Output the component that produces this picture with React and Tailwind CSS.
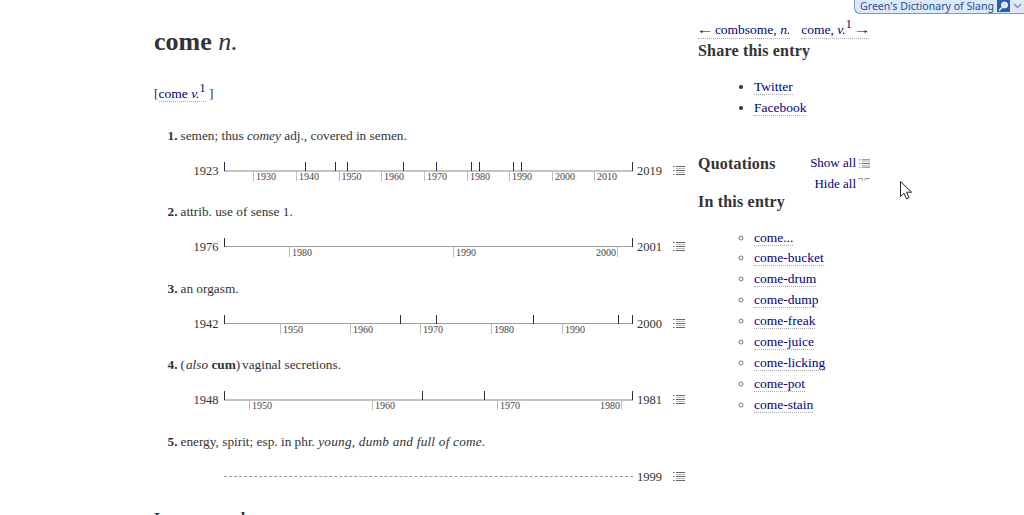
import React from "react";

const ListIcon = ({ className = "" }) => (
  <svg width="12" height="11" viewBox="0 0 12 11" className={className} fill="none" stroke="#666" strokeWidth="1">
    <path d="M0 1.5h1.5M3 1.5h9M0 5.5h1.5M3 5.5h9M0 9.5h1.5M3 9.5h9" />
    <path d="M3 3.5h9M3 7.5h9" stroke="#bbb" />
  </svg>
);

const HideIcon = () => (
  <svg width="12" height="6" viewBox="0 0 12 6" fill="none" stroke="#999" strokeWidth="1">
    <path d="M0 1.5h4.5v2M7 3.5v-2h5" />
  </svg>
);

const Timeline = ({ start, end, major = [], minor = [], thick = false, dashed = false }) => (
  <div className="flex items-start h-[20px] mt-[19px]">
    <div className="w-[64.5px] text-right text-[12.5px] leading-[16px] text-[#333]">{start}</div>
    <div className="relative w-[409px] ml-[5.5px] h-[20px] shrink-0">
      {dashed ? (
        <div className="mt-[7px] border-t border-dashed border-[#999]" />
      ) : (
        <div className={thick ? "mt-[7px] h-[2px] bg-[#c4c4c4]" : "mt-[7px] h-[1px] bg-[#9e9e9e]"} />
      )}
      {major.map((x) => (
        <span key={x} className="absolute top-[-1px] w-[1px] h-[9px] bg-[#2a2a44]" style={{ left: x - 224 }} />
      ))}
      {minor.map(([x, label, right]) => (
        <span
          key={label}
          className="absolute top-[8px] h-[10px] w-[1px] bg-[#bdbdbd]"
          style={{ left: x - 224 }}
        >
          <span
            className={
              right
                ? "absolute right-[2px] top-[-1px] text-[10px] leading-[14px] text-[#444]"
                : "absolute left-[3px] top-[-1px] text-[10px] leading-[14px] text-[#444]"
            }
          >
            {label}
          </span>
        </span>
      ))}
    </div>
    <div className="ml-[4px] w-[25px] text-[12.5px] leading-[16px] text-[#333]">{end}</div>
    <ListIcon className="ml-[11px] mt-[2px]" />
  </div>
);

const Sense = ({ n, children, ...t }) => (
  <div className="h-[76.4px]">
    <p className="pl-[13.5px] text-[13.3px] leading-[16px] h-[16px] text-[#333] whitespace-nowrap">
      <b className="mr-[3px]">{n}.</b>
      {children}
    </p>
    <Timeline {...t} />
  </div>
);

const A = ({ children, className = "" }) => (
  <a className={`text-[#000080] border-b border-dotted border-[#aaa] ${className}`}>{children}</a>
);

const H3 = ({ children, className = "" }) => (
  <h3 className={`font-bold text-[16px] tracking-[0.2px] leading-[20px] text-[#333] ${className}`}>{children}</h3>
);

const entries = ["come...", "come-bucket", "come-drum", "come-dump", "come-freak", "come-juice", "come-licking", "come-pot", "come-stain"];

export default function App() {
  return (
    <div className="relative h-[515px] w-[1024px] overflow-hidden bg-white [font-family:'Liberation_Serif',serif] flex">
      <main className="w-[544px] ml-[154px] shrink-0">
        <h1 className="mt-[27px] text-[26px] leading-[30px] font-bold text-[#333] whitespace-nowrap">
          come <i className="font-normal">n.</i>
        </h1>
        <p className="mt-[28px] h-[18px] text-[13.5px] leading-[18px] text-[#333]">
          [<A>come <i>v.</i><sup className="text-[12px]">1</sup></A> ]
        </p>
        <div className="mt-[25px]">
          <Sense
            n={1}
            start="1923"
            end="2019"
            thick
            major={[224, 304.5, 335, 347, 403, 436, 471, 479, 513, 521, 632]}
            minor={[[253, "1930"], [296, "1940"], [338.5, "1950"], [381, "1960"], [424, "1970"], [467, "1980"], [509, "1990"], [552, "2000"], [594, "2010"]]}
          >
            semen; thus <i>comey</i> adj., covered in semen.
          </Sense>
          <Sense n={2} start="1976" end="2001" major={[224, 632]} minor={[[289, "1980"], [453, "1990"], [617, "2000", true]]}>
            attrib. use of sense 1.
          </Sense>
          <Sense
            n={3}
            start="1942"
            end="2000"
            major={[224, 400, 435.5, 533, 618, 632]}
            minor={[[280, "1950"], [350, "1960"], [420, "1970"], [491, "1980"], [562, "1990"]]}
          >
            an orgasm.
          </Sense>
          <Sense
            n={4}
            start="1948"
            end="1981"
            thick
            major={[224, 422, 484, 632]}
            minor={[[249, "1950"], [372, "1960"], [497, "1970"], [621, "1980", true]]}
          >
            (<i className="ml-[1px]">also</i> <b>cum</b><span className="mr-[-1.5px]">)</span> vaginal secretions.
          </Sense>
          <Sense n={5} start="" end="1999" dashed>
            energy, spirit; esp. in phr. <i className="tracking-[0.2px]">young, dumb and full of come.</i>
          </Sense>
        </div>
        <h3 className="font-bold text-[16px] leading-[20px] text-[#333] mt-[-1px]">In compounds</h3>
      </main>

      <aside className="w-[172px] text-[13.5px] text-[#333] shrink-0">
        <div className="mt-[21px] h-[18px] leading-[17px] whitespace-nowrap flex gap-[11px]">
          <A><span className="inline-block scale-x-[1.3]">←</span> combsome, <i>n.</i></A>
          <A>come, <i>v.</i><sup className="text-[12px]">1</sup> <span className="inline-block scale-x-[1.3]">→</span></A>
        </div>
        <H3 className="mt-[1.5px]">Share this entry</H3>
        <ul className="mt-[16px] pl-[56px] list-disc">
          {["Twitter", "Facebook"].map((t) => (
            <li key={t} className="h-[21px] leading-[19px]"><A>{t}</A></li>
          ))}
        </ul>
        <div className="mt-[33px] flex justify-between h-[38px]">
          <H3 className="mt-[2px]">Quotations</H3>
          <div className="text-right leading-[20px] text-[13px] mt-[1px]">
            <div className="flex justify-end items-center gap-[3px] h-[21px] text-[#000080]">Show all <ListIcon className="w-[11px]" /></div>
            <div className="flex justify-end items-center gap-[2px] h-[21px] text-[#000080]">Hide all <span className="mb-[8px]"><HideIcon /></span></div>
          </div>
        </div>
        <H3 className="mt-[2px]">In this entry</H3>
        <ul className="mt-[16px] pl-[56px] list-[circle] marker:text-[#777]">
          {entries.map((t) => (
            <li key={t} className="h-[20.9px] leading-[19px]"><A>{t}</A></li>
          ))}
        </ul>
      </aside>

      <div className="absolute right-0 top-[-2px] h-[16px] w-[170px] flex items-center gap-[2px] pl-[5px] rounded-bl-[6px] border border-t-0 border-r-0 border-[#6f9bd1] bg-[#dbe9f9] [font-family:'Noto_Sans',sans-serif] text-[10.6px] leading-[14px] text-[#1e4f91] whitespace-nowrap">
        Green's Dictionary of Slang
        <svg width="13" height="12" viewBox="0 0 13 12" className="ml-[1px] shrink-0">
          <rect width="13" height="12" fill="#2a5ea8" />
          <circle cx="7.5" cy="5" r="3" fill="#cfe2f7" stroke="#fff" />
          <path d="M5 7.5 2 10.5" stroke="#fff" strokeWidth="1.5" />
        </svg>
        <svg width="9" height="6" viewBox="0 0 9 6" fill="none" stroke="#8a8f98" strokeWidth="1.5" className="ml-[1px]">
          <path d="M1 1l3.5 3.5L8 1" />
        </svg>
      </div>

      <svg width="12" height="19" viewBox="0 0 12 19" className="absolute left-[900px] top-[181px]">
        <path d="M.5.5v15l3.5-3.3 2.4 5.6 2.6-1.1-2.4-5.5h5z" fill="#fff" stroke="#222" strokeWidth="1" />
      </svg>
    </div>
  );
}
